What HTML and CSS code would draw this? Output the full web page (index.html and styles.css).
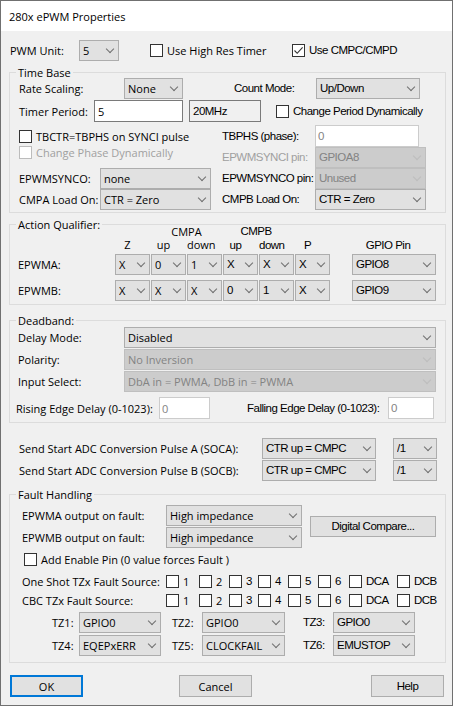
FILE: index.html
```
<!DOCTYPE html>
<html lang="en">
<head>
<meta charset="utf-8">
<title>280x ePWM Properties</title>
<link rel="stylesheet" href="styles.css">
</head>
<body>
<div class="win">
  <div class="titlebar">280x ePWM Properties</div>
  <div class="client">

    <div class="row unit-row">
      <span>PWM Unit:</span>
      <div class="combo"><span class="v">5</span></div>
      <span></span>
      <label class="chk"><span class="box"></span><span>Use High Res Timer</span></label>
      <label class="chk n"><span class="box"><svg width="11" height="11" viewBox="0 0 11 11"><path d="M1.5 5.5 L4.2 8.3 L9.6 2.4" fill="none" stroke="#333" stroke-width="1.1"/></svg></span><span>Use CMPC/CMPD</span></label>
    </div>

    <div class="group g-tb">
      <span class="legend">Time Base</span>
      <div class="row tb1">
        <span>Rate Scaling:</span>
        <div class="combo"><span class="v">None</span></div>
        <span></span>
        <span class="n">Count Mode:</span>
        <div class="combo n"><span class="v">Up/Down</span></div>
      </div>
      <div class="row tb2">
        <span>Timer Period:</span>
        <div class="edit">5</div>
        <span></span>
        <div class="edit ro n">20MHz</div>
        <span></span>
        <label class="chk n"><span class="box"></span><span>Change Period Dynamically</span></label>
      </div>
      <div class="row tb3">
        <label class="chk"><span class="box"></span><span>TBCTR=TBPHS on SYNCI pulse</span></label>
        <span class="n">TBPHS (phase):</span>
        <div class="edit dis n">0</div>
      </div>
      <div class="row tb4">
        <label class="chk dis"><span class="box"></span><span>Change Phase Dynamically</span></label>
        <span class="n gray">EPWMSYNCI pin:</span>
        <div class="combo dis n"><span class="v">GPIOA8</span></div>
      </div>
      <div class="row tb5">
        <span>EPWMSYNCO:</span>
        <div class="combo"><span class="v">none</span></div>
        <span></span>
        <span class="n">EPWMSYNCO pin:</span>
        <div class="combo dis n"><span class="v">Unused</span></div>
      </div>
      <div class="row tb5">
        <span>CMPA Load On:</span>
        <div class="combo"><span class="v">CTR = Zero</span></div>
        <span></span>
        <span class="n">CMPB Load On:</span>
        <div class="combo n"><span class="v">CTR = Zero</span></div>
      </div>
    </div>

    <div class="group g-aq">
      <span class="legend">Action Qualifier:</span>
      <div class="aq aq-h1">
        <span class="cmpa">CMPA</span>
        <span class="cmpb n">CMPB</span>
      </div>
      <div class="aq aq-h2">
        <span></span>
        <span class="hd">Z</span>
        <span class="hd">up</span>
        <span class="hd">down</span>
        <span class="hd n">up</span>
        <span class="hd n">down</span>
        <span class="hd n">P</span>
        <span></span>
        <span class="hd gp n">GPIO Pin</span>
      </div>
      <div class="aq aq-a">
        <span>EPWMA:</span>
        <div class="combo"><span class="v">X</span></div>
        <div class="combo"><span class="v">0</span></div>
        <div class="combo"><span class="v">1</span></div>
        <div class="combo n"><span class="v">X</span></div>
        <div class="combo n"><span class="v">X</span></div>
        <div class="combo n"><span class="v">X</span></div>
        <span></span>
        <div class="combo n"><span class="v">GPIO8</span></div>
      </div>
      <div class="aq aq-b">
        <span>EPWMB:</span>
        <div class="combo"><span class="v">X</span></div>
        <div class="combo"><span class="v">X</span></div>
        <div class="combo"><span class="v">X</span></div>
        <div class="combo n"><span class="v">0</span></div>
        <div class="combo n"><span class="v">1</span></div>
        <div class="combo n"><span class="v">X</span></div>
        <span></span>
        <div class="combo n"><span class="v">GPIO9</span></div>
      </div>
    </div>

    <div class="group g-db">
      <span class="legend">Deadband:</span>
      <div class="row db db1">
        <span>Delay Mode:</span>
        <div class="combo"><span class="v">Disabled</span></div>
      </div>
      <div class="row db db2">
        <span>Polarity:</span>
        <div class="combo dis"><span class="v">No Inversion</span></div>
      </div>
      <div class="row db db2">
        <span>Input Select:</span>
        <div class="combo dis"><span class="v">DbA in = PWMA, DbB in = PWMA</span></div>
      </div>
      <div class="row db4">
        <span>Rising Edge Delay (0-1023):</span>
        <div class="edit dis">0</div>
        <span></span>
        <span class="n">Falling Edge Delay (0-1023):</span>
        <div class="edit dis n">0</div>
      </div>
    </div>

    <div class="row soc soc1">
      <span>Send Start ADC Conversion Pulse A (SOCA):</span>
      <div class="combo n"><span class="v">CTR up = CMPC</span></div>
      <span></span>
      <div class="combo n"><span class="v">/1</span></div>
    </div>
    <div class="row soc soc2">
      <span>Send Start ADC Conversion Pulse B (SOCB):</span>
      <div class="combo n"><span class="v">CTR up = CMPC</span></div>
      <span></span>
      <div class="combo n"><span class="v">/1</span></div>
    </div>

    <div class="group g-fh">
      <span class="legend">Fault Handling</span>
      <div class="fh-top">
        <div class="fh-col">
          <div class="row fh-out">
            <span>EPWMA output on fault:</span>
            <div class="combo"><span class="v">High impedance</span></div>
          </div>
          <div class="row fh-out fh-out2">
            <span>EPWMB output on fault:</span>
            <div class="combo"><span class="v">High impedance</span></div>
          </div>
        </div>
        <div class="btn dc n">Digital Compare...</div>
      </div>
      <div class="fh-en">
        <label class="chk"><span class="box"></span><span>Add Enable Pin (0 value forces Fault )</span></label>
      </div>
      <div class="row tzs tzs1">
        <span>One Shot TZx Fault Source:</span>
        <label class="chk"><span class="box"></span><span>1</span></label>
        <label class="chk"><span class="box"></span><span>2</span></label>
        <label class="chk n"><span class="box"></span><span>3</span></label>
        <label class="chk n"><span class="box"></span><span>4</span></label>
        <label class="chk n"><span class="box"></span><span>5</span></label>
        <label class="chk n"><span class="box"></span><span>6</span></label>
        <label class="chk n"><span class="box"></span><span>DCA</span></label>
        <label class="chk n"><span class="box"></span><span>DCB</span></label>
      </div>
      <div class="row tzs tzs2">
        <span>CBC TZx Fault Source:</span>
        <label class="chk"><span class="box"></span><span>1</span></label>
        <label class="chk"><span class="box"></span><span>2</span></label>
        <label class="chk n"><span class="box"></span><span>3</span></label>
        <label class="chk n"><span class="box"></span><span>4</span></label>
        <label class="chk n"><span class="box"></span><span>5</span></label>
        <label class="chk n"><span class="box"></span><span>6</span></label>
        <label class="chk n"><span class="box"></span><span>DCA</span></label>
        <label class="chk n"><span class="box"></span><span>DCB</span></label>
      </div>
      <div class="row tz tz1">
        <span>TZ1:</span>
        <div class="combo"><span class="v">GPIO0</span></div>
        <span></span>
        <span>TZ2:</span>
        <div class="combo"><span class="v">GPIO0</span></div>
        <span></span>
        <span class="n">TZ3:</span>
        <div class="combo n"><span class="v">GPIO0</span></div>
      </div>
      <div class="row tz tz2">
        <span>TZ4:</span>
        <div class="combo"><span class="v">EQEPxERR</span></div>
        <span></span>
        <span>TZ5:</span>
        <div class="combo"><span class="v">CLOCKFAIL</span></div>
        <span></span>
        <span class="n">TZ6:</span>
        <div class="combo n"><span class="v">EMUSTOP</span></div>
      </div>
    </div>

    <div class="btns">
      <div class="btn def">OK</div>
      <div class="btn cancel">Cancel</div>
      <div class="btn help n">Help</div>
    </div>

  </div>
</div>
</body>
</html>
```

FILE: styles.css
```
* { box-sizing: border-box; }
html, body { margin: 0; padding: 0; background: #f0f0f0; }
body {
  font-family: "Segoe UI", "Open Sans", "Noto Sans", sans-serif;
  font-size: 11px;
  line-height: 15px;
  color: #000;
}
.win {
  width: 453px;
  height: 706px;
  border: 1px solid #707070;
  background: #f0f0f0;
  overflow: hidden;
}
.titlebar {
  height: 30px;
  background: #fff;
  padding-left: 8px;
  display: flex;
  align-items: center;
}
.n {
  font-family: "Liberation Sans", Arial, sans-serif;
  font-size: 11.5px;
  letter-spacing: -0.5px;
}
.gray { color: #a0a0a0; }

.row { display: grid; align-items: center; white-space: nowrap; }

/* controls */
.combo {
  height: 21px;
  border: 1px solid #adadad;
  background: #e1e1e1;
  display: flex;
  align-items: center;
  padding-left: 3px;
  white-space: nowrap;
  overflow: hidden;
}
.combo .v { flex: 1; overflow: hidden; }
.combo::after {
  content: "";
  flex: none;
  width: 5px;
  height: 5px;
  border-right: 1px solid #6f6f6f;
  border-bottom: 1px solid #6f6f6f;
  transform: rotate(45deg);
  margin: -4px 5px 0 3px;
}
.combo.dis { background: #cccccc; border-color: #bfbfbf; color: #838383; }
.combo.dis::after { border-color: #bdbdbd; }

.edit {
  height: 22px;
  border: 1px solid #7a7a7a;
  background: #fff;
  display: flex;
  align-items: center;
  padding-left: 3px;
}
.edit.ro { background: #f0f0f0; }
.edit.dis { border-color: #cccccc; color: #838383; background: #fff; padding-left: 2px; }

.chk {
  display: flex;
  align-items: center;
  gap: 4px;
  line-height: 13px;
  white-space: nowrap;
}
.box {
  flex: none;
  width: 13px;
  height: 13px;
  border: 1px solid #333;
  background: #fff;
  display: flex;
  align-items: center;
  justify-content: center;
}
.chk.dis { color: #a0a0a0; }
.chk.dis .box { border-color: #bcbcbc; }

.btn {
  height: 22px;
  width: 73px;
  border: 1px solid #adadad;
  background: #e1e1e1;
  display: flex;
  align-items: center;
  justify-content: center;
}
.btn.def { border: 2px solid #0078d7; }

/* groups */
.group {
  position: relative;
  margin-left: 8px;
  width: 437px;
  border: 1px solid #dcdcdc;
}
.legend {
  position: absolute;
  left: 6px;
  top: -8px;
  padding: 0 2px;
  background: #f0f0f0;
  line-height: 15px;
}

/* PWM unit row */
.unit-row {
  margin-top: 9px;
  height: 21px;
  padding-left: 9px;
  grid-template-columns: 69px 40px 31px 142px auto;
}

/* time base */
.g-tb { margin-top: 11px; padding-bottom: 2px; }
.tb1 { margin-top: 5px; height: 21px; padding-left: 9px; grid-template-columns: 105px 59px 51px 82px 104px; }
.tb2 { margin-top: 1px; height: 22px; padding-left: 9px; grid-template-columns: 75px 89px 6px 72px 15px auto; }
.tb3 { margin-top: 3px; height: 22px; padding-left: 9px; grid-template-columns: 203px 93px 104px; }
.tb4 { margin-top: 0; height: 21px; padding-left: 9px; grid-template-columns: 203px 93px 111px; }
.tb4 .chk { align-self: start; margin-top: -1px; }
.tb5 { height: 21px; padding-left: 9px; grid-template-columns: 81px 111px 11px 93px 111px; }

/* action qualifier */
.g-aq { margin-top: 11px; padding-bottom: 3px; }
.aq {
  display: grid;
  grid-template-columns: 96px repeat(6, 35px) 20px 84px;
  column-gap: 1px;
  padding-left: 8px;
  align-items: center;
  white-space: nowrap;
}
.aq-h1 { height: 13px; line-height: 13px; }
.aq-h1 .cmpa { grid-column: 3 / span 2; text-align: center; }
.aq-h1 .cmpb { grid-column: 5 / span 2; text-align: center; padding-right: 5px; }
.aq-h2 { height: 14px; line-height: 14px; }
.aq-h2 .hd { text-align: center; padding-right: 10px; }
.aq-h2 .gp { padding-right: 12px; }
.aq-a { margin-top: 2px; height: 21px; }
.aq-b { margin-top: 5px; height: 21px; }

/* deadband */
.g-db { margin-top: 15px; padding-bottom: 3px; }
.db { height: 21px; padding-left: 8px; grid-template-columns: 106px 312px; }
.db1 { margin-top: 6px; }
.db2 { margin-top: 1px; }
.db4 { margin-top: 5px; height: 22px; padding-left: 6px; grid-template-columns: 143px 51px 37px 141px 46px; }

/* SOC */
.soc { height: 21px; padding-left: 18px; grid-template-columns: 243px 114px 17px 44px; }
.soc1 { margin-top: 15px; }
.soc2 { margin-top: 1px; }

/* fault handling */
.g-fh { margin-top: 13px; padding-bottom: 6px; }
.fh-top { display: flex; align-items: center; margin-top: 10px; padding-left: 12px; }
.fh-out { height: 21px; grid-template-columns: 144px 136px; }
.fh-out2 { margin-top: 1px; }
.btn.dc { width: 126px; height: 21px; margin-left: 8px; }
.fh-en { margin-top: 3px; height: 17px; padding-left: 14px; display: flex; align-items: center; }
.tzs { height: 17px; padding-left: 12px; grid-template-columns: 144px 33px 30px 29px 30px 30px 31px 48px 40px; }
.tzs1 { margin-top: 5px; }
.tzs2 { margin-top: 2px; }
.tz { height: 21px; padding-left: 42px; grid-template-columns: 27px 82px 11px 30px 83px 18px 30px 82px; }
.tz1 { margin-top: 3px; }
.tz2 { margin-top: 2px; }

/* buttons */
.btns { display: flex; margin-top: 12px; padding-left: 9px; padding-right: 8px; }
.btn.cancel { margin-left: 96px; }
.btn.help { margin-left: auto; }
```
